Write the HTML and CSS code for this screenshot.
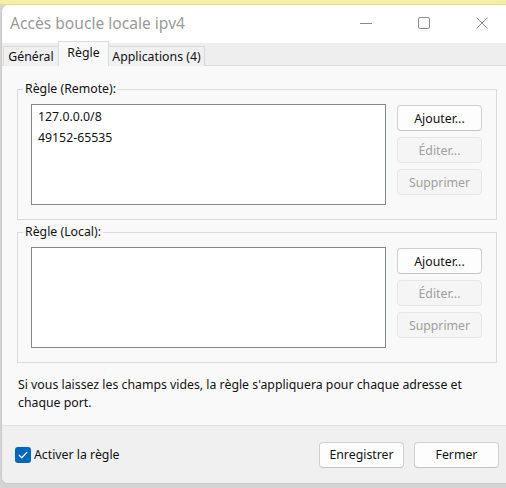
FILE: index.html
```html
<!DOCTYPE html>
<html lang="fr">
<head>
<meta charset="utf-8">
<title>Accès boucle locale ipv4</title>
<link rel="stylesheet" href="styles.css">
</head>
<body>
<div class="desk-band"></div>
<div class="window">
  <div class="titlebar">
    <div class="title">Accès boucle locale ipv4</div>
    <div class="caption">
      <svg class="cap-icon" viewBox="0 0 12 12" width="12" height="12"><path d="M0 6.5h12" stroke="#8a8a8a" stroke-width="1" fill="none"/></svg>
      <svg class="cap-icon" viewBox="0 0 12 12" width="12" height="12"><rect x="0.5" y="0.5" width="11" height="11" rx="1.5" stroke="#8a8a8a" stroke-width="1" fill="none"/></svg>
      <svg class="cap-icon" viewBox="0 0 12 12" width="12" height="12"><path d="M0.5 0.5L11.5 11.5M11.5 0.5L0.5 11.5" stroke="#8a8a8a" stroke-width="1" fill="none"/></svg>
    </div>
  </div>
  <div class="tabstrip">
    <div class="tab tab-general">Général</div>
    <div class="tab tab-active">Règle</div>
    <div class="tab tab-apps">Applications (4)</div>
  </div>
  <div class="content">
    <fieldset class="group group-remote">
      <legend class="legend">Règle (Remote):</legend>
      <div class="group-body">
        <div class="listbox">
          <div class="item">127.0.0.0/8</div>
          <div class="item">49152-65535</div>
        </div>
        <div class="btn-col">
          <div class="btn">Ajouter...</div>
          <div class="btn btn-disabled">Éditer...</div>
          <div class="btn btn-disabled">Supprimer</div>
        </div>
      </div>
    </fieldset>
    <fieldset class="group group-local">
      <legend class="legend">Règle (Local):</legend>
      <div class="group-body">
        <div class="listbox"></div>
        <div class="btn-col">
          <div class="btn">Ajouter...</div>
          <div class="btn btn-disabled">Éditer...</div>
          <div class="btn btn-disabled">Supprimer</div>
        </div>
      </div>
    </fieldset>
    <p class="note">Si vous laissez les champs vides, la règle s'appliquera pour chaque adresse et chaque port.</p>
  </div>
  <div class="footer">
    <label class="check">
      <span class="checkbox"><svg viewBox="0 0 16 16" width="16" height="16"><path d="M4.2 8.3l2.6 2.5 5-5.4" stroke="#fff" stroke-width="1.3" fill="none" stroke-linecap="round" stroke-linejoin="round"/></svg></span>
      <span class="check-label">Activer la règle</span>
    </label>
    <div class="footer-btns">
      <div class="btn">Enregistrer</div>
      <div class="btn">Fermer</div>
    </div>
  </div>
</div>
</body>
</html>
```
FILE: styles.css
```css
* { box-sizing: border-box; }
html, body { margin: 0; padding: 0; }
body {
  width: 506px;
  height: 488px;
  overflow: hidden;
  background: #d4d4d4;
  font-family: "Noto Sans", "Open Sans", sans-serif;
  font-size: 12.3px;
  color: #111;
}
.desk-band {
  height: 5px;
  background: #f3efa3;
  border-bottom: 1px solid #e4dd8f;
}
.window {
  margin-left: 1px;
  height: 479px;
  border-left: 1px solid #c9c9c9;
  border-bottom: 1px solid #c9c9c9;
  border-radius: 7px 0 0 7px;
  overflow: hidden;
  background: #f9f9f9;
  display: flex;
  flex-direction: column;
}
.titlebar {
  height: 38px;
  background: #ffffff;
  display: flex;
  align-items: center;
  flex: none;
}
.title {
  padding-left: 8px;
  font-size: 15.6px;
  color: #9a9a9a;
  padding-bottom: 2px;
}
.caption {
  margin-left: auto;
  display: flex;
  gap: 46px;
  padding-right: 18px;
  padding-bottom: 2px;
}
.cap-icon { display: block; }
.tabstrip {
  height: 23px;
  background: #eeeeee;
  display: flex;
  align-items: flex-end;
  padding-left: 1px;
  flex: none;
  border-bottom: 1px solid #dcdcdc;
  position: relative;
}
.tab {
  height: 20px;
  border: 1px solid #d9d9d9;
  border-bottom: none;
  background: #f0f0f0;
  display: flex;
  align-items: center;
  justify-content: center;
  color: #111;
  margin-bottom: -1px;
}
.tab-general { width: 55px; border-right: none; }
.tab-active {
  width: 51px;
  height: 25px;
  background: #f9f9f9;
  padding-bottom: 4px;
  border-color: #dcdcdc;
  position: relative;
  z-index: 1;
}
.tab-apps { width: 96px; border-left: none; }
.content {
  flex: 1;
  background: #f9f9f9;
  padding: 15px 9px 0 15px;
}
.group {
  margin: 0;
  padding: 0;
  border: 1px solid #dcdcdc;
  min-width: 0;
}
.legend {
  margin-left: 5px;
  padding: 0 2px;
  line-height: 16px;
  color: #111;
}
.group-body {
  display: flex;
  gap: 11px;
  padding: 7px 14px 14px 13px;
}
.group-local { margin-top: 4px; }
.listbox {
  flex: 1;
  height: 101px;
  background: #ffffff;
  border: 1px solid #828790;
  padding: 1px 0 0 6px;
}
.item {
  line-height: 21px;
  height: 21px;
}
.btn-col {
  display: flex;
  flex-direction: column;
  gap: 6px;
  padding-top: 1px;
}
.btn {
  width: 85px;
  height: 26px;
  border: 1px solid #d0d0d0;
  border-bottom-color: #c4c4c4;
  border-radius: 4px;
  background: #fdfdfd;
  display: flex;
  align-items: center;
  justify-content: center;
  color: #111;
}
.btn-disabled {
  background: #f5f5f5;
  border-color: #e6e6e6;
  color: #a0a0a0;
}
.note {
  margin: 13px 0 0 1px;
  line-height: 18px;
  color: #111;
}
.footer {
  height: 58px;
  flex: none;
  background: #f0f0f0;
  border-top: 1px solid #e2e2e2;
  display: flex;
  align-items: center;
  padding: 0 7px 0 13px;
}
.check {
  display: flex;
  align-items: center;
  gap: 3px;
}
.checkbox {
  width: 16px;
  height: 16px;
  border-radius: 3px;
  background: #0067c0;
  display: block;
}
.checkbox svg { display: block; }
.footer-btns {
  margin-left: auto;
  display: flex;
  gap: 10px;
}
```
